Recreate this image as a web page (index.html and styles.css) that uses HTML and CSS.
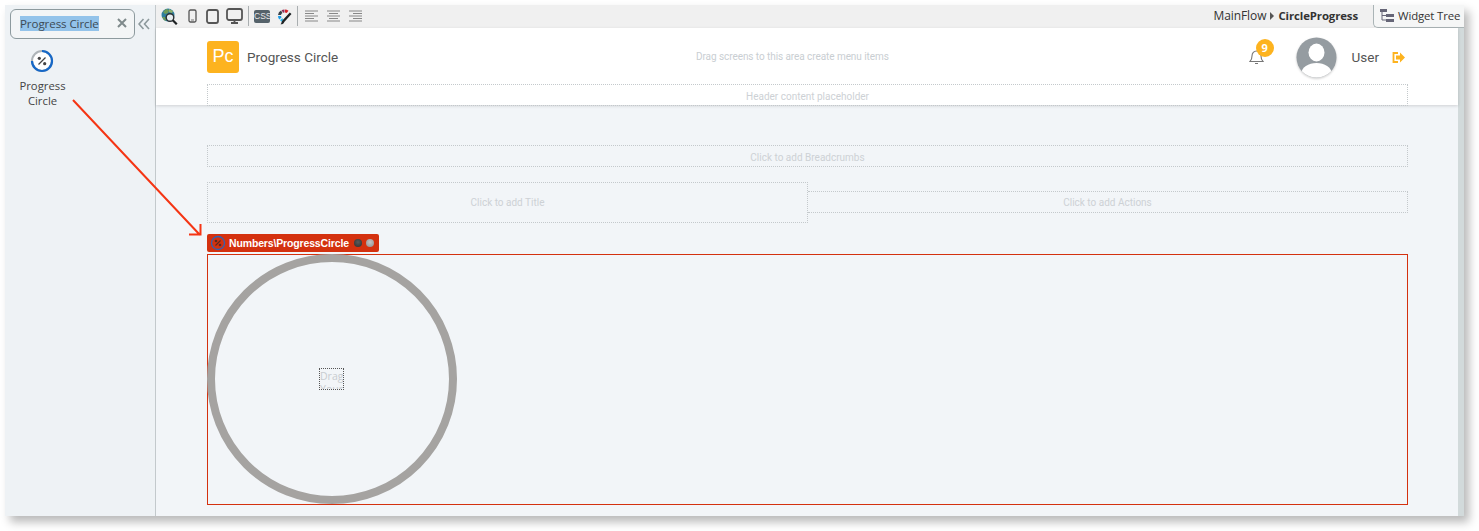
FILE: index.html
```html
<!DOCTYPE html>
<html lang="en">
<head>
<meta charset="utf-8">
<title>Progress Circle</title>
<link rel="stylesheet" href="styles.css">
</head>
<body>
<div class="app">
  <aside class="side">
    <div class="search-row">
      <div class="search"><span class="sel">Progress Circle</span><svg class="x" width="10" height="10" viewBox="0 0 10 10"><path d="M1 1l8 8M9 1L1 9" stroke="#7f8a8c" stroke-width="2"/></svg></div>
      <svg class="chev" width="12" height="12" viewBox="0 0 12 12"><path d="M5.500 1L1 6l4.500 5M11 1L6.500 6l4.500 5" fill="none" stroke="#8d999c" stroke-width="1.600"/></svg>
    </div>
    <div class="widget">
      <svg width="24" height="24" viewBox="0 0 24 24"><circle cx="12" cy="12" r="10" fill="#fff" stroke="#aeb4b8" stroke-width="2"/><path d="M12 2a10 10 0 1 1-10 10" fill="none" stroke="#1668c7" stroke-width="2.200"/><path d="M8.500 15.500l7-7" stroke="#444" stroke-width="1.300"/><circle cx="9.300" cy="9.300" r="1.600" fill="#444"/><circle cx="14.700" cy="14.700" r="1.600" fill="#444"/></svg>
      <div class="widget-name">Progress<br>Circle</div>
    </div>
  </aside>
  <div class="main">
    <div class="toolbar">
      <div class="tools">
        <svg class="ic" width="17" height="17" viewBox="0 0 17 17"><circle cx="7" cy="7" r="6.500" fill="#2f7f9e"/><path d="M2 4l3-3 3 1-1 3-3 1zM1 9l3 0 1 3-1 1z" fill="#6f9c58"/><path d="M8 1l4 2-1 2-3-1z" fill="#8fb06a"/><circle cx="9" cy="9.500" r="3.800" fill="#e6edf0" stroke="#2a3033" stroke-width="1.400"/><path d="M11.800 12.300l4 4" stroke="#1f2224" stroke-width="2.200"/></svg>
        <svg class="ic m1" width="9" height="14" viewBox="0 0 9 14"><rect x="1" y="1" width="7" height="12" rx="1.500" fill="none" stroke="#555" stroke-width="1.300"/><path d="M3 11h3" stroke="#777" stroke-width="1"/></svg>
        <svg class="ic m2" width="13" height="15" viewBox="0 0 13 15"><rect x="1" y="1" width="11" height="13" rx="2" fill="none" stroke="#555" stroke-width="1.800"/></svg>
        <svg class="ic m3" width="17" height="16" viewBox="0 0 17 16"><rect x="1" y="1" width="15" height="11" rx="2" fill="none" stroke="#555" stroke-width="1.800"/><path d="M5 15h7M8.500 12v3" stroke="#555" stroke-width="1.800"/></svg>
        <span class="sep s1"></span>
        <span class="css">CSS</span>
        <svg class="ic m4" width="15" height="17" viewBox="0 0 15 17"><path d="M1 7a6 6 0 0 1 3-4.500l1.500 2.500a3 3 0 0 0-1.500 2z" fill="#3a4148"/><path d="M4.500 2.200a6 6 0 0 1 3-.7v3a3 3 0 0 0-1.300.3z" fill="#8a2f5c"/><path d="M8 1.500a6 6 0 0 1 3.500 1.200l-1.800 2.200a3 3 0 0 0-1.700-.5z" fill="#d8232a"/><path d="M1 8h3l.6 1.600-2.400 1.800A6 6 0 0 1 1 8z" fill="#1d9be6"/><path d="M3 12.200l2.200-1.900 1 .7-1.300 2.700A6 6 0 0 1 3 12.200z" fill="#2fb7ea"/><path d="M3.500 16.300c2.500 0 3.200-.8 3.800-2.300L14.500 6 12.800 4.500 5.600 12.200c-1.200 1.200-.8 3-2.100 4.100z" fill="#1e2224"/></svg>
        <span class="sep s2"></span>
        <svg class="ic m5" width="13" height="12" viewBox="0 0 13 12"><path class="ln" d="M0 1h13M0 3.500h9M0 6h13M0 8.500h9M0 11h13"/></svg>
        <svg class="ic m6" width="13" height="12" viewBox="0 0 13 12"><path class="ln" d="M0 1h13M2 3.500h9M0 6h13M2 8.500h9M0 11h13"/></svg>
        <svg class="ic m6" width="13" height="12" viewBox="0 0 13 12"><path class="ln" d="M0 1h13M4 3.500h9M0 6h13M4 8.500h9M0 11h13"/></svg>
      </div>
      <div class="crumb">MainFlow <span class="tri"></span> <b>CircleProgress</b></div>
      <div class="tree-tab">
        <svg width="14" height="13" viewBox="0 0 14 13"><path d="M2 3v8h4M2 6.500h4" fill="none" stroke="#667" stroke-width="1"/><rect x="0" y="0" width="7" height="3" fill="#667"/><rect x="6" y="5" width="8" height="3" fill="#667"/><rect x="6" y="10" width="8" height="3" fill="#667"/></svg>
        <span>Widget Tree</span>
      </div>
    </div>
    <div class="canvas-wrap">
      <div class="canvas">
        <header class="header">
          <div class="head-row">
            <div class="brand"><span class="logo">Pc</span><span class="app-name">Progress Circle</span></div>
            <div class="menu-hint">Drag screens to this area create menu items</div>
            <div class="user">
              <div class="bell-wrap">
                <svg width="15" height="16" viewBox="0 0 15 16"><path d="M1 12.500c1.500-1.500 2-2.500 2-5.500s2-5 4.500-5 4.500 2 4.500 5 .5 4 2 5.500zM6 14.500h3" fill="none" stroke="#777" stroke-width="1.100"/></svg>
                <span class="badge">9</span>
              </div>
              <svg class="avatar" width="41" height="41" viewBox="0 0 41 41"><defs><clipPath id="av"><circle cx="20.500" cy="20.500" r="20"/></clipPath></defs><circle cx="20.500" cy="20.500" r="20" fill="#959ca1"/><g clip-path="url(#av)" fill="#fff"><ellipse cx="20.500" cy="15.500" rx="8" ry="9"/><ellipse cx="20.500" cy="36" rx="15" ry="10"/></g></svg>
              <span class="user-name">User</span>
              <svg class="logout" width="13" height="11" viewBox="0 0 13 11"><path d="M6 1H1.500v9H6" fill="none" stroke="#fdb31f" stroke-width="1.800"/><path d="M4 3.500h4V.5l5 5-5 5v-3H4z" fill="#fdb31f"/></svg>
            </div>
          </div>
          <div class="ph header-ph">Header content placeholder</div>
        </header>
        <div class="body">
          <div class="ph crumbs">Click to add Breadcrumbs</div>
          <div class="title-row">
            <div class="ph title">Click to add Title</div>
            <div class="ph actions">Click to add Actions</div>
          </div>
          <div class="tag">
            <svg width="16" height="16" viewBox="0 0 16 16"><circle cx="8" cy="8" r="6.500" fill="none" stroke="#2f62b5" stroke-width="1.300"/><path d="M5.500 10.500l5-5" stroke="#5b2a20" stroke-width="1.100"/><circle cx="6" cy="6" r="1.300" fill="#5b2a20"/><circle cx="10" cy="10" r="1.300" fill="#5b2a20"/></svg>
            <span class="tag-name">Numbers\ProgressCircle</span>
            <span class="dot dark"></span>
            <span class="dot light"></span>
          </div>
          <div class="block">
            <div class="ring"><div class="drag"><span>Drag<br>Your</span></div></div>
          </div>
        </div>
      </div>
      <div class="scroll"></div>
    </div>
  </div>
</div>
<svg class="arrow" width="140" height="150" viewBox="0 0 140 150"><path d="M2 2L129 137M118 136.500h11.500V126" fill="none" stroke="#f53514" stroke-width="2"/></svg>
</body>
</html>
```

FILE: styles.css
```css
* { box-sizing: border-box; }
html, body { margin: 0; padding: 0; background: #fff; }
body { width: 1479px; height: 531px; overflow: hidden; padding: 5px 0 0 5px; position: relative; font-family: "Open Sans", "Liberation Sans", sans-serif; }
.app { width: 1459px; height: 511px; display: flex; box-shadow: 5px 6px 9px rgba(0,0,0,.28); }

.side { width: 151px; flex: none; background: #eef2f5; border-right: 1px solid #c3c9cc; padding-top: 4px; }
.search-row { display: flex; align-items: center; padding-left: 5px; }
.search { width: 125px; height: 30px; border: 1px solid #8d9a9e; border-radius: 6px; background: #f3f5f6; display: flex; align-items: center; justify-content: space-between; padding: 0 7px 2px 9px; }
.sel { background: #93c3ea; color: #3c4a55; font-size: 11.600px; line-height: 15px; letter-spacing: -.1px; }
.chev { margin-left: 3px; }
.widget { width: 75px; margin: 10px 0 0 0; display: flex; flex-direction: column; align-items: center; }
.widget svg { margin-right: 2px; }
.widget-name { margin-top: 5px; font-size: 11.300px; line-height: 15px; text-align: center; color: #444; }

.main { flex: 1; min-width: 0; display: flex; flex-direction: column; }
.toolbar { height: 23px; flex: none; background: #f0f0f0; display: flex; align-items: center; position: relative; }
.tools { display: flex; align-items: center; padding-left: 5px; flex: 1; padding-bottom: 1px; }
.ic { display: block; flex: none; }
.m1 { margin-left: 10px; }
.m2 { margin-left: 9px; }
.m3 { margin-left: 7px; }
.sep { width: 1px; height: 20px; background: #a9aeb0; flex: none; }
.s1 { margin: 0 5px 0 5px; }
.s2 { margin: 0 7px 0 5px; }
.css { width: 16px; height: 13px; background: #55626a; color: #e8e8e8; font: 8.500px/13px "Liberation Sans", sans-serif; text-align: center; border-radius: 2px; }
.m4 { margin-left: 7px; }
.m5 { margin-left: 0; }
.m6 { margin-left: 9px; }
.ln { stroke: #888; stroke-width: 1; fill: none; }
.crumb { font-size: 12px; color: #333; white-space: nowrap; margin-right: 15px; letter-spacing: -.1px; padding-bottom: 2px; }
.crumb b { font-weight: 700; font-size: 11.400px; }
.tri { display: inline-block; width: 0; height: 0; border-left: 4px solid #555; border-top: 4px solid transparent; border-bottom: 4px solid transparent; margin: 0 1px; }
.tree-tab { width: 91px; height: 23px; background: #f5f6f6; border-left: 1px solid #aab4b6; border-bottom: 1px solid #aab4b6; border-bottom-left-radius: 5px; display: flex; align-items: center; gap: 4px; padding: 0 0 2px 6px; font-size: 11.400px; color: #333; letter-spacing: -.12px; white-space: nowrap; }

.canvas-wrap { flex: 1; min-height: 0; display: flex; }
.canvas { flex: 1; min-width: 0; background: #f2f5f8; }
.scroll { width: 6px; flex: none; background: #d2dadb; }

.header { height: 77px; background: #fff; padding: 0 50px 0 51px; box-shadow: 0 1px 3px rgba(0,0,0,.15); position: relative; }
.head-row { height: 56px; display: flex; align-items: center; justify-content: space-between; padding-top: 2px; }
.brand { display: flex; align-items: center; gap: 8px; width: 489px; }
.logo { width: 32px; height: 32px; border-radius: 3px; background: #fdb31f; color: #fff; font: 18px/30px "Liberation Sans", sans-serif; text-align: center; }
.app-name { font: 13.500px/20px Roboto, sans-serif; color: #555; }
.menu-hint { font: 10px/14px Roboto, sans-serif; color: #c9ced2; white-space: nowrap; flex: 1; letter-spacing: -.07px; }
.user { display: flex; align-items: center; }
.bell-wrap { position: relative; width: 15px; height: 16px; }
.bell-wrap svg { display: block; }
.badge { position: absolute; left: 7px; top: -10px; width: 18px; height: 18px; border-radius: 50%; background: #fdb31f; color: #fff; font: 700 11px/18px "Open Sans", sans-serif; text-align: center; }
.avatar { margin-left: 32px; display: block; filter: drop-shadow(0 1px 1px rgba(0,0,0,.2)); }
.user-name { margin-left: 15px; font: 13.500px/20px Roboto, sans-serif; color: #555; }
.logout { margin: 0 3px 0 13px; }

.ph { border: 1px dotted #c4c9cc; color: #cdd1d5; font: 10px/14px Roboto, sans-serif; display: flex; align-items: center; justify-content: center; }
.header-ph { height: 22px; padding-top: 3px; }
.body { padding: 40px 50px 0 51px; }
.crumbs { height: 22px; padding-top: 3px; }
.title-row { display: flex; align-items: center; margin-top: 15px; }
.title { width: 601px; height: 41px; }
.actions { flex: 1; height: 22px; border-left: 0; margin-bottom: 2px; padding-top: 2px; }
.tag { display: flex; align-items: center; width: 172px; height: 18px; margin-top: 11px; background: #d4310f; border-radius: 2px; padding-left: 3px; }
.tag-name { margin-left: 3px; font: 700 10.500px/18px "Liberation Sans", sans-serif; color: #fff; white-space: nowrap; letter-spacing: -.15px; }
.dot { width: 8px; height: 8px; border-radius: 50%; flex: none; }
.dark { margin-left: 5px; background: radial-gradient(circle at 50% 40%, #5a5a5a, #2e2e2e); }
.light { margin-left: 4px; background: radial-gradient(circle at 50% 40%, #c4c4c4, #8e8e8e); }
.block { height: 251px; margin-top: 2px; border: 1px solid #d4310f; }
.ring { width: 250px; height: 250px; margin: -1px 0 0 -1px; border: 8px solid #a5a3a1; border-radius: 50%; display: flex; align-items: center; justify-content: center; }
.drag { width: 25px; height: 22px; margin-left: -1px; border: 1px dotted #555; overflow: hidden; color: #c8ccd0; font: 10.500px/13px "Open Sans", sans-serif; text-align: center; padding-top: 1px; }

.arrow { position: absolute; left: 71px; top: 98px; }
```
